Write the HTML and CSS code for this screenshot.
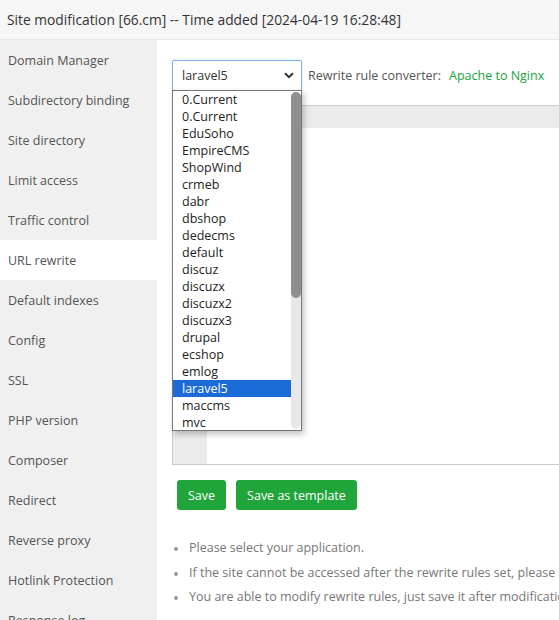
FILE: index.html
```html
<!DOCTYPE html>
<html lang="en">
<head>
<meta charset="UTF-8">
<meta name="viewport" content="width=device-width, initial-scale=1.0">
<title>Site modification</title>
<link rel="stylesheet" href="styles.css">
</head>
<body>
<div class="header">Site modification [66.cm] -- Time added [2024-04-19 16:28:48]</div>
<div class="layout">
  <ul class="sidebar">
    <li>Domain Manager</li>
    <li>Subdirectory binding</li>
    <li>Site directory</li>
    <li>Limit access</li>
    <li>Traffic control</li>
    <li class="active">URL rewrite</li>
    <li>Default indexes</li>
    <li>Config</li>
    <li>SSL</li>
    <li>PHP version</li>
    <li>Composer</li>
    <li>Redirect</li>
    <li>Reverse proxy</li>
    <li>Hotlink Protection</li>
    <li>Response log</li>
  </ul>
  <div class="main">
    <div class="toolbar">
      <div class="select">
        <span>laravel5</span>
        <svg class="chevron" width="10" height="7" viewBox="0 0 10 7"><path d="M1 1.2 L5 5.2 L9 1.2" fill="none" stroke="#333" stroke-width="2"/></svg>
      </div>
      <span class="converter">Rewrite rule converter:</span>
      <a href="#" class="link">Apache to Nginx</a>
    </div>
    <div class="editor">
      <div class="active-line"></div>
      <div class="gutter"></div>
    </div>
    <div class="actions">
      <button class="btn">Save</button>
      <button class="btn">Save as template</button>
    </div>
    <ul class="tips">
      <li>Please select your application.</li>
      <li>If the site cannot be accessed after the rewrite rules set, please try to set back to default.</li>
      <li>You are able to modify rewrite rules, just save it after modification.</li>
    </ul>

    <!-- open select list -->
    <div class="dropdown">
      <ul class="options">
        <li>0.Current</li>
        <li>0.Current</li>
        <li>EduSoho</li>
        <li>EmpireCMS</li>
        <li>ShopWind</li>
        <li>crmeb</li>
        <li>dabr</li>
        <li>dbshop</li>
        <li>dedecms</li>
        <li>default</li>
        <li>discuz</li>
        <li>discuzx</li>
        <li>discuzx2</li>
        <li>discuzx3</li>
        <li>drupal</li>
        <li>ecshop</li>
        <li>emlog</li>
        <li class="selected">laravel5</li>
        <li>maccms</li>
        <li>mvc</li>
      </ul>
      <div class="scroll-track"><div class="scroll-thumb"></div></div>
    </div>
  </div>
</div>
</body>
</html>
```

FILE: styles.css
```css
*{margin:0;padding:0;box-sizing:border-box;}
html,body{height:100%;overflow:hidden;}
body{font-family:"Open Sans","Noto Sans",sans-serif;font-size:12.5px;color:#333;background:#fff;}
ul{list-style:none;}

.header{height:40px;line-height:39px;padding-left:7px;font-size:13.8px;color:#333;background:#f6f6f6;border-bottom:1px solid #e8e8e8;white-space:nowrap;}

.layout{display:flex;height:580px;}
.sidebar{width:157px;flex-shrink:0;background:#f0f0f0;}
.sidebar li{height:40px;line-height:41px;padding-left:8px;color:#555;white-space:nowrap;}
.sidebar li.active{background:#fff;}

.main{position:relative;flex:1;padding:20px 0 0 15px;min-width:0;}
.toolbar{display:flex;align-items:center;white-space:nowrap;}
.select{width:130px;height:31px;border:1px solid #80b4e8;border-radius:2px;display:flex;align-items:center;justify-content:space-between;padding:0 7px 0 9px;color:#333;box-shadow:0 0 2px rgba(64,150,230,.35);}
.converter{margin-left:6px;color:#555;}
.link{margin-left:8px;color:#20a53a;text-decoration:none;}

.editor{position:relative;margin-top:14px;width:620px;height:360px;border:1px solid #ccc;display:flex;}
.gutter{width:34px;background:#ebebeb;}
.active-line{position:absolute;left:0;right:0;top:0;height:22px;background:#ebebeb;}

.actions{display:flex;gap:10px;margin:15px 0 0 5px;}
.btn{height:30px;padding:0 11px;border:none;border-radius:3px;background:#20a53a;color:#fff;font-family:inherit;font-size:12.5px;}

.tips{margin-top:26px;padding-left:2px;color:#777;white-space:nowrap;}
.tips li{position:relative;padding-left:15px;line-height:24.5px;}
.tips li::before{content:"";position:absolute;left:0;top:11px;width:4px;height:4px;border-radius:50%;background:#999;}

.dropdown{position:absolute;left:15px;top:50px;width:130px;height:341px;background:#fff;border:1px solid #767676;box-shadow:2px 3px 6px rgba(0,0,0,.25);overflow:hidden;}
.options li{height:17px;line-height:17px;padding-left:9px;color:#222;white-space:nowrap;}
.options li.selected{background:#1a6ad8;color:#fff;margin-right:10px;}
.scroll-track{position:absolute;right:0;top:1px;bottom:1px;width:10px;background:#e8e8e8;border-radius:5px;}
.scroll-thumb{height:206px;background:#8f8f8f;border-radius:5px;}
```
